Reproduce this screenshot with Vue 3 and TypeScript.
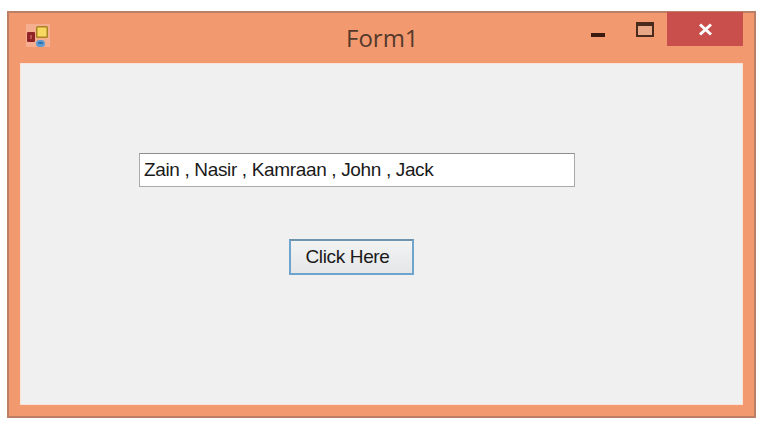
<script setup lang="ts">
const title = 'Form1'
const names = 'Zain , Nasir , Kamraan , John , Jack'
</script>

<template>
  <div class="page">
    <div class="window">
      <header class="titlebar">
        <svg class="app-icon" width="24" height="23" viewBox="0 0 24 23">
          <rect width="24" height="23" fill="#f5ae90" />
          <rect x="1" y="8" width="8" height="10" rx="1" fill="#8f2326" />
          <rect x="4" y="11" width="2" height="4" fill="#b8554f" />
          <rect x="10" y="2" width="12" height="12" rx="1.5" fill="#a98420" />
          <rect x="11.5" y="3.5" width="9" height="9" fill="#f8d860" />
          <rect x="10" y="16" width="9" height="7" rx="3.5" fill="#5f9bd0" />
          <rect x="12" y="18" width="5" height="2" rx="1" fill="#2f6ea8" />
        </svg>
        <div class="title">{{ title }}</div>
        <div class="controls">
          <svg class="min" width="14" height="4" viewBox="0 0 14 4">
            <rect width="14" height="4" fill="#3b1a10" />
          </svg>
          <svg class="max" width="18" height="15" viewBox="0 0 18 15">
            <rect x="1" y="1" width="16" height="13" fill="#e8a888" stroke="#4a2a1c" stroke-width="2" />
            <rect x="1" y="1" width="16" height="3" fill="#4a2a1c" />
          </svg>
          <div class="close">
            <svg width="15" height="13" viewBox="0 0 15 13">
              <path d="M2 1.5 L13 11.5 M13 1.5 L2 11.5" stroke="#fff" stroke-width="3" fill="none" />
            </svg>
          </div>
        </div>
      </header>
      <main class="client">
        <div class="textbox">{{ names }}</div>
        <button class="button" type="button">Click Here</button>
      </main>
    </div>
  </div>
</template>

<style scoped>
.page {
  width: 768px;
  height: 430px;
  padding: 11px 0 0 7px;
  box-sizing: border-box;
  background: #fff;
  overflow: hidden;
}
.window {
  width: 749px;
  height: 407px;
  box-sizing: border-box;
  border: 2px solid #bb7f66;
  background: #f3996f;
  padding: 0 11px 11px 11px;
  display: flex;
  flex-direction: column;
}
.titlebar {
  height: 50px;
  flex: none;
  display: flex;
  align-items: flex-start;
}
.app-icon {
  margin: 11px 0 0 6px;
  flex: none;
}
.title {
  flex: 1;
  margin-top: 5px;
  margin-left: 296px;
  font-family: "Open Sans", sans-serif;
  font-size: 24px;
  line-height: 40px;
  color: #54392d;
}
.controls {
  display: flex;
  align-items: flex-start;
  flex: none;
}
.min {
  margin: 20px 0 0 0;
}
.max {
  margin: 9px 0 0 31px;
}
.close {
  width: 76px;
  height: 34px;
  margin: -1px 0 0 13px;
  background: #c94f4c;
  display: flex;
  align-items: center;
  justify-content: center;
}
.client {
  flex: 1;
  box-sizing: border-box;
  border: 1px solid #fbe3d8;
  background: #f0f0f0;
  padding-top: 89px;
  display: flex;
  flex-direction: column;
  align-items: flex-start;
}
.textbox {
  width: 436px;
  height: 34px;
  box-sizing: border-box;
  margin-left: 118px;
  border: 1px solid #a9a9a9;
  border-top-color: #8f8f8f;
  background: #fff;
  padding-left: 4px;
  font-family: "Liberation Sans", Arial, sans-serif;
  font-size: 19px;
  letter-spacing: -0.35px;
  line-height: 32px;
  color: #1a1a1a;
  white-space: nowrap;
}
.button {
  width: 125px;
  height: 36px;
  box-sizing: border-box;
  margin: 52px 0 0 268px;
  border: 2px solid #6fa5cc;
  border-top-color: #6d93ad;
  background: linear-gradient(#f3f3f3, #e4e6e8);
  padding: 0 8px 0 0;
  font-family: "Liberation Sans", Arial, sans-serif;
  font-size: 19px;
  letter-spacing: -0.35px;
  color: #1a1a1a;
}
</style>
